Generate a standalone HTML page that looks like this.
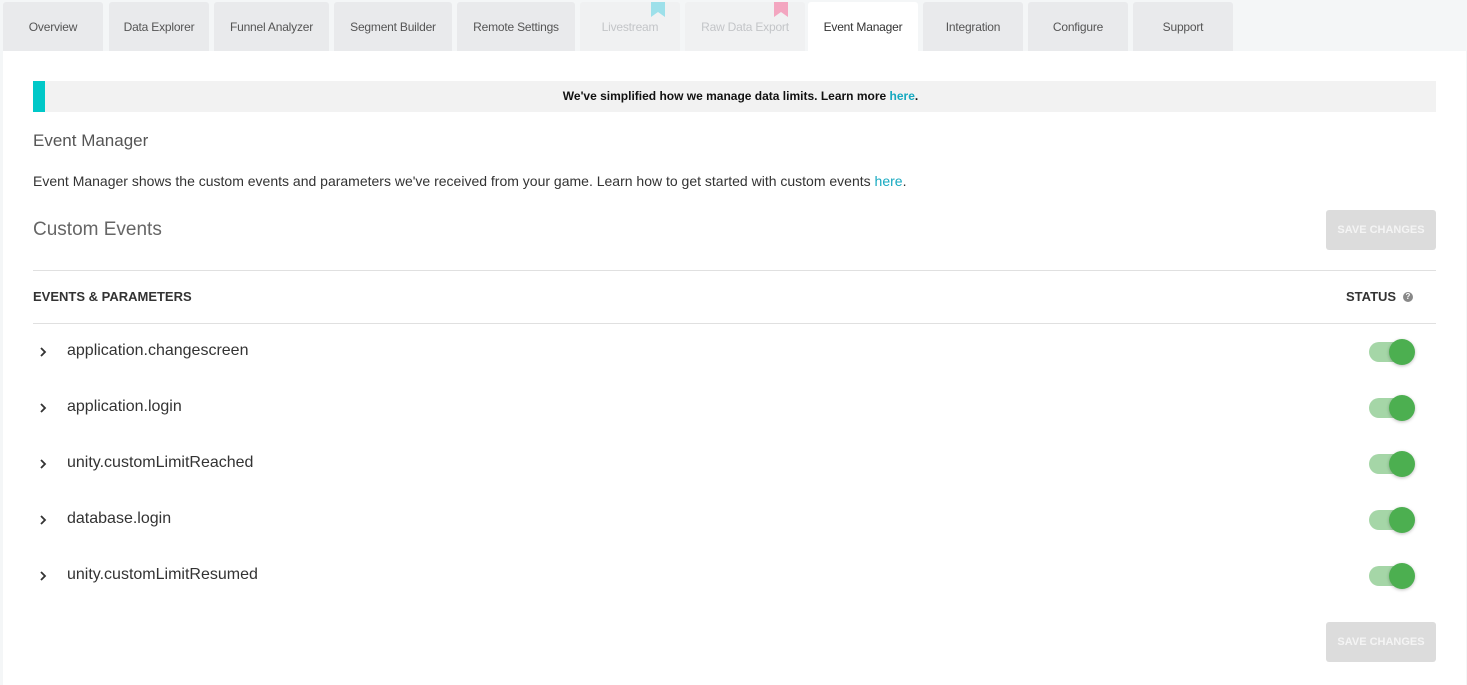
<!DOCTYPE html>
<html><head><style>
*{margin:0;padding:0;box-sizing:border-box}
body{width:1467px;height:685px;background:#f4f6f7;font-family:"Liberation Sans",sans-serif;position:relative;overflow:hidden;color:#333}
.tab{position:absolute;top:2px;height:49px;background:#e9eaec;border-radius:3px 3px 0 0;font-size:12px;color:#555;display:flex;align-items:center;justify-content:center;letter-spacing:-0.2px}
.tab.dis{background:#f0f1f2;color:#c3c5c8}
.tab.act{background:#fff;color:#333}
.panel{position:absolute;left:3px;top:51px;width:1463px;height:634px;background:#fff}
.abs{position:absolute}
.row{position:absolute;left:33px;width:1403px;height:56px}
.row .chev{position:absolute;left:5px;top:15px}
.row .name{position:absolute;left:34px;top:10px;font-size:16px;color:#333}
.tog{position:absolute;left:1336px;top:10px;width:38px;height:20px;border-radius:10px;background:#a5d6a7}
.tog:after{content:"";position:absolute;left:20px;top:-3px;width:26px;height:26px;border-radius:50%;background:#4caf50;box-shadow:0 1px 3px rgba(0,0,0,.25)}
.btn{position:absolute;left:1326px;width:110px;height:40px;background:#dcdcdc;border-radius:3px;color:#f4f4f4;font-weight:bold;font-size:11px;display:flex;align-items:center;justify-content:center}
</style></head><body>
<div class="tab" style="left:3px;width:100px">Overview</div>
<div class="tab" style="left:109px;width:100px">Data Explorer</div>
<div class="tab" style="left:214px;width:115px">Funnel Analyzer</div>
<div class="tab" style="left:334px;width:118px">Segment Builder</div>
<div class="tab" style="left:457px;width:118px">Remote Settings</div>
<div class="tab dis" style="left:580px;width:100px">Livestream<svg class="abs" style="left:71px;top:0" width="14" height="15"><path d="M0 0H14V15L7 10L0 15Z" fill="#9de0ea"/></svg></div>
<div class="tab dis" style="left:685px;width:120px">Raw Data Export<svg class="abs" style="left:89px;top:0" width="14" height="15"><path d="M0 0H14V15L7 10L0 15Z" fill="#f3a6c0"/></svg></div>
<div class="tab act" style="left:808px;width:110px">Event Manager</div>
<div class="tab" style="left:923px;width:100px">Integration</div>
<div class="tab" style="left:1028px;width:100px">Configure</div>
<div class="tab" style="left:1133px;width:100px">Support</div>
<div class="panel"></div>
<div class="abs" style="left:33px;top:81px;width:1403px;height:31px;background:#f2f2f2"></div>
<div class="abs" style="left:33px;top:81px;width:12px;height:31px;background:#00c8c8"></div>
<div class="abs" style="left:45px;top:89px;width:1391px;text-align:center;font-size:12px;font-weight:bold;color:#111">We've simplified how we manage data limits. Learn more <span style="color:#16a9c0">here</span>.</div>
<div class="abs" style="left:33px;top:131px;font-size:17px;color:#555">Event Manager</div>
<div class="abs" style="left:33px;top:173px;font-size:14px;color:#333">Event Manager shows the custom events and parameters we've received from your game. Learn how to get started with custom events <span style="color:#16a9c0">here</span>.</div>
<div class="abs" style="left:33px;top:219px;font-size:19px;color:#666">Custom Events</div>
<div class="btn" style="top:210px">SAVE CHANGES</div>
<div class="abs" style="left:33px;top:270px;width:1403px;height:1px;background:#e0e0e0"></div>
<div class="abs" style="left:33px;top:289px;font-size:13px;font-weight:bold;color:#333">EVENTS &amp; PARAMETERS</div>
<div class="abs" style="left:1346px;top:289px;font-size:13px;font-weight:bold;color:#333">STATUS</div>
<div class="abs" style="left:1403px;top:292px;width:10px;height:10px;border-radius:50%;background:#888;color:#fff;font-size:8px;line-height:10px;text-align:center;font-weight:bold">?</div>
<div class="abs" style="left:33px;top:323px;width:1403px;height:1px;background:#e0e0e0"></div>
<div class="row" style="top:332px"><svg class="chev" width="10" height="10"><path d="M3 1L7 5L3 9" stroke="#333" stroke-width="1.8" fill="none"/></svg><div class="name">application.changescreen</div><div class="tog"></div></div>
<div class="row" style="top:388px"><svg class="chev" width="10" height="10"><path d="M3 1L7 5L3 9" stroke="#333" stroke-width="1.8" fill="none"/></svg><div class="name">application.login</div><div class="tog"></div></div>
<div class="row" style="top:444px"><svg class="chev" width="10" height="10"><path d="M3 1L7 5L3 9" stroke="#333" stroke-width="1.8" fill="none"/></svg><div class="name">unity.customLimitReached</div><div class="tog"></div></div>
<div class="row" style="top:500px"><svg class="chev" width="10" height="10"><path d="M3 1L7 5L3 9" stroke="#333" stroke-width="1.8" fill="none"/></svg><div class="name">database.login</div><div class="tog"></div></div>
<div class="row" style="top:556px"><svg class="chev" width="10" height="10"><path d="M3 1L7 5L3 9" stroke="#333" stroke-width="1.8" fill="none"/></svg><div class="name">unity.customLimitResumed</div><div class="tog"></div></div>
<div class="btn" style="top:622px">SAVE CHANGES</div>
</body></html>
